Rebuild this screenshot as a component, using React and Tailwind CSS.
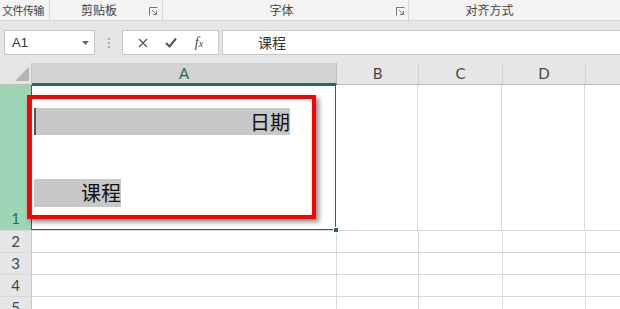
const cols = [
  { name: "A", w: "w-[305px]" },
  { name: "B", w: "w-[82px]" },
  { name: "C", w: "w-[84px]" },
  { name: "D", w: "w-[83px]" },
];

function Launcher() {
  return (
    <svg className="h-[9px] w-[9px]" viewBox="0 0 9 9" fill="none" stroke="#777" strokeWidth="1">
      <path d="M0.5 8.5V0.5H8.5" />
      <path d="M3 3l4.5 4.5M4 7.5h3.5V4" />
    </svg>
  );
}

function PlainRow({ n }) {
  return (
    <div className="flex h-[22px] border-b border-[#d9d9d9]">
      <div className="w-[32px] shrink-0 bg-[#e6e6e6] border-r border-[#c6c6c6] flex items-center justify-center text-[15px] text-[#444]">
        {n}
      </div>
      {cols.map((c) => (
        <div key={c.name} className={`${c.w} shrink-0 border-r border-[#d9d9d9]`} />
      ))}
      <div className="flex-1" />
    </div>
  );
}

export default function App() {
  return (
    <div className="w-[620px] h-[309px] overflow-hidden bg-white font-['Lato','Noto_Sans_CJK_SC',sans-serif]">
      {/* ribbon group labels */}
      <div className="flex h-[21px] bg-[#f3f3f3] border-b border-[#d5d5d5] text-[12px] text-[#444] font-['Noto_Sans_CJK_SC',sans-serif] leading-[20px] whitespace-nowrap">
        <div className="w-[50px] pl-[2px] border-r border-[#d5d5d5] text-[11px] tracking-[-0.5px] overflow-hidden">文件传输</div>
        <div className="w-[113px] relative border-r border-[#d5d5d5] flex justify-center pr-[14px]">
          剪贴板
          <span className="absolute right-[4px] top-[7px]"><Launcher /></span>
        </div>
        <div className="w-[246px] relative border-r border-[#d5d5d5] flex justify-center pr-[8px]">
          字体
          <span className="absolute right-[3px] top-[7px]"><Launcher /></span>
        </div>
        <div className="flex-1 flex justify-center pr-[50px]">对齐方式</div>
      </div>

      {/* formula bar */}
      <div className="h-[42px] bg-[#e6e6e6] flex items-start pt-[9px] pl-[4px]">
        <div className="w-[91px] h-[25px] bg-white border border-[#c6c6c6] flex items-center justify-between pl-[7px] pr-[5px] text-[13px] text-[#333] font-['Liberation_Sans',sans-serif]">
          A1
          <svg className="h-[4px] w-[7px]" viewBox="0 0 7 4"><path d="M0 0h7L3.5 4z" fill="#666" /></svg>
        </div>
        <div className="w-[27px] h-[25px] flex flex-col items-center justify-center gap-[2px]">
          <span className="w-[2px] h-[2px] bg-[#aaa]" />
          <span className="w-[2px] h-[2px] bg-[#aaa]" />
          <span className="w-[2px] h-[2px] bg-[#aaa]" />
        </div>
        <div className="w-[97px] h-[25px] bg-white border border-[#c6c6c6] flex items-center justify-around px-[6px]">
          <svg className="h-[10px] w-[10px]" viewBox="0 0 10 10" stroke="#555" strokeWidth="1.3"><path d="M1 1l8 8M9 1l-8 8" /></svg>
          <svg className="h-[11px] w-[12px]" viewBox="0 0 12 11" fill="none" stroke="#555" strokeWidth="2"><path d="M1 6l3.5 3.5L11 1.5" /></svg>
          <span className="text-[14px] italic text-[#444] font-['Liberation_Serif',serif] leading-none">f<span className="text-[10px]">x</span></span>
        </div>
        <div className="ml-[3px] flex-1 h-[25px] bg-white border border-[#c6c6c6] border-r-0 flex items-center pl-[35px] text-[14px] text-[#333] font-['Noto_Sans_CJK_SC',sans-serif]">
          课程
        </div>
      </div>

      {/* column headers */}
      <div className="flex h-[22px] bg-[#e6e6e6] border-b border-[#bdbdbd] text-[15px] text-[#444]">
        <div className="w-[32px] shrink-0 border-r border-[#c6c6c6] relative">
          <svg className="absolute left-[15px] top-[4px] h-[14px] w-[14px]" viewBox="0 0 14 14"><path d="M14 0V14H0z" fill="#b4b4b4" /></svg>
        </div>
        {cols.map((c) => (
          <div
            key={c.name}
            className={`${c.w} shrink-0 flex items-center justify-center border-r ${
              c.name === "A" ? "bg-[#d2d2d2] border-[#bdbdbd] text-[#217346] border-b-2 border-b-[#217346] -mb-px" : "border-[#d0d0d0]"
            }`}
          >
            {c.name}
          </div>
        ))}
        <div className="flex-1" />
      </div>

      {/* row 1 */}
      <div className="flex h-[146px] border-b border-[#d9d9d9]">
        <div className="w-[32px] shrink-0 bg-[#9fd5b7] border-r border-[#217346] flex items-end justify-center pb-[1px] text-[15px] text-[#217346]">
          1
        </div>
        <div className="w-[305px] shrink-0 relative border-[1.5px] border-[#217346] -ml-px">
          <div className="flex flex-col pt-[22px] pl-[2px] text-[20px] text-[#111] font-['Noto_Sans_CJK_SC',sans-serif]">
            <div className="w-[256px] h-[27px] bg-[#c8c8c8] border-l-2 border-[#555] flex items-center justify-end leading-none">
              日期
            </div>
            <div className="mt-[44px] w-[87px] h-[28px] bg-[#c8c8c8] flex items-center justify-end leading-none">
              课程
            </div>
          </div>
          <div className="absolute left-[-5px] top-[9px] w-[289px] h-[124px] border-[4px] border-[#ff0000] shadow-[3px_3px_5px_rgba(0,0,0,0.45)]" />
          <div className="absolute right-[-4px] bottom-[-4px] w-[6px] h-[6px] bg-[#217346] border border-white" />
        </div>
        <div className="w-[82px] shrink-0 border-r border-[#d9d9d9]" />
        <div className="w-[84px] shrink-0 border-r border-[#d9d9d9]" />
        <div className="w-[83px] shrink-0 border-r border-[#d9d9d9]" />
        <div className="flex-1" />
      </div>

      <PlainRow n={2} />
      <PlainRow n={3} />
      <PlainRow n={4} />
      <PlainRow n={5} />
    </div>
  );
}
